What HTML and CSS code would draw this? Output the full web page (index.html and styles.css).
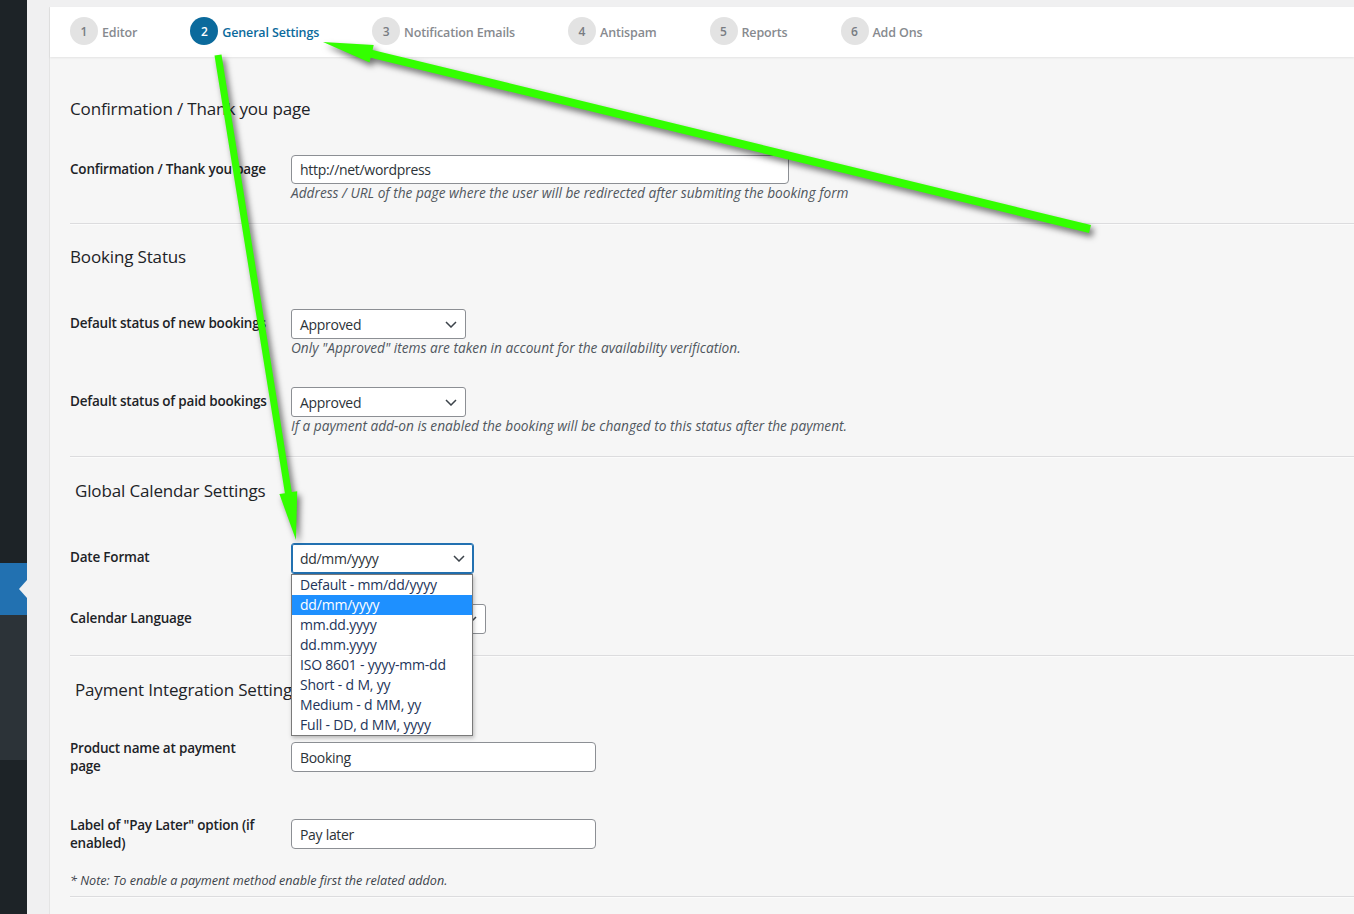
FILE: index.html
```html
<!DOCTYPE html>
<html lang="en">
<head>
  <meta charset="UTF-8">
  <meta name="viewport" content="width=device-width, initial-scale=1.0">
  <title>General Settings</title>
  <link rel="stylesheet" href="styles.css">
</head>
<body>
  <!-- Admin menu strip -->
  <div class="admin-menu">
    <div class="menu-top"></div>
    <div class="menu-current"><span class="menu-notch"></span></div>
    <div class="menu-sub"></div>
    <div class="menu-rest"></div>
  </div>

  <div class="wrap">
    <div class="panel">
      <!-- Steps -->
      <nav class="steps">
        <div class="step"><span class="step-num">1</span><span class="step-label">Editor</span></div>
        <div class="step active"><span class="step-num">2</span><span class="step-label">General Settings</span></div>
        <div class="step"><span class="step-num">3</span><span class="step-label">Notification Emails</span></div>
        <div class="step"><span class="step-num">4</span><span class="step-label">Antispam</span></div>
        <div class="step"><span class="step-num">5</span><span class="step-label">Reports</span></div>
        <div class="step"><span class="step-num">6</span><span class="step-label">Add Ons</span></div>
      </nav>

      <div class="settings">
        <!-- Confirmation -->
        <h3 class="section-title first">Confirmation / Thank you page</h3>
        <div class="field-row">
          <label class="field-label">Confirmation / Thank you page</label>
          <div class="field">
            <input class="text-input input-url" type="text" value="http://net/wordpress" readonly>
            <p class="field-desc">Address / URL of the page where the user will be redirected after submiting the booking form</p>
          </div>
        </div>
        <hr class="divider">

        <!-- Booking status -->
        <h3 class="section-title">Booking Status</h3>
        <div class="field-row">
          <label class="field-label">Default status of new bookings</label>
          <div class="field">
            <div class="select select-status">
              <span>Approved</span>
              <svg class="chevron" width="12" height="7" viewBox="0 0 12 7"><path d="M1 1l5 5 5-5" fill="none" stroke="#3c434a" stroke-width="1.5"/></svg>
            </div>
            <p class="field-desc">Only "Approved" items are taken in account for the availability verification.</p>
          </div>
        </div>
        <div class="field-row">
          <label class="field-label">Default status of paid bookings</label>
          <div class="field">
            <div class="select select-status">
              <span>Approved</span>
              <svg class="chevron" width="12" height="7" viewBox="0 0 12 7"><path d="M1 1l5 5 5-5" fill="none" stroke="#3c434a" stroke-width="1.5"/></svg>
            </div>
            <p class="field-desc">If a payment add-on is enabled the booking will be changed to this status after the payment.</p>
          </div>
        </div>
        <hr class="divider">

        <!-- Calendar -->
        <h3 class="section-title indented">Global Calendar Settings</h3>
        <div class="field-row">
          <label class="field-label">Date Format</label>
          <div class="field">
            <div class="select select-date focused">
              <span>dd/mm/yyyy</span>
              <svg class="chevron" width="12" height="7" viewBox="0 0 12 7"><path d="M1 1l5 5 5-5" fill="none" stroke="#3c434a" stroke-width="1.5"/></svg>
            </div>
            <ul class="dropdown-list">
              <li>Default - mm/dd/yyyy</li>
              <li class="selected">dd/mm/yyyy</li>
              <li>mm.dd.yyyy</li>
              <li>dd.mm.yyyy</li>
              <li>ISO 8601 - yyyy-mm-dd</li>
              <li>Short - d M, yy</li>
              <li>Medium - d MM, yy</li>
              <li>Full - DD, d MM, yyyy</li>
            </ul>
          </div>
        </div>
        <div class="field-row">
          <label class="field-label">Calendar Language</label>
          <div class="field">
            <!-- value is covered by the open list -->
            <div class="select select-lang">
              <span></span>
              <svg class="chevron" width="12" height="7" viewBox="0 0 12 7"><path d="M1 1l5 5 5-5" fill="none" stroke="#3c434a" stroke-width="1.5"/></svg>
            </div>
          </div>
        </div>
        <hr class="divider">

        <!-- Payment -->
        <h3 class="section-title indented">Payment Integration Settings</h3>
        <div class="field-row">
          <label class="field-label two-line">Product name at payment page</label>
          <div class="field">
            <input class="text-input input-short" type="text" value="Booking" readonly>
          </div>
        </div>
        <div class="field-row tall">
          <label class="field-label two-line">Label of "Pay Later" option (if enabled)</label>
          <div class="field">
            <input class="text-input input-short" type="text" value="Pay later" readonly>
          </div>
        </div>
        <p class="note">* Note: To enable a payment method enable first the related addon.</p>
        <hr class="divider last">
      </div>
    </div>
  </div>

  <!-- Green annotation arrows -->
  <svg class="annotations" width="1354" height="914" viewBox="0 0 1354 914">
    <polygon points="214.5,55.6 221.5,54.4 291.8,492 297.2,491.2 296,540 279.4,494 284.9,493.2" fill="#33ff00"/>
    <polygon points="323,42 373.7,45.1 372.6,49.9 1091,225.1 1089,232.9 370.7,57.7 369.5,62.5" fill="#33ff00"/>
  </svg>
</body>
</html>
```

FILE: styles.css
```css
/* Base */
* {
  box-sizing: border-box;
}
body {
  margin: 0;
  width: 1354px;
  height: 914px;
  overflow: hidden;
  display: flex;
  position: relative;
  background-color: #f0f0f1;
  font-family: "Open Sans", "Noto Sans", sans-serif;
  font-size: 14px;
  color: #1d2327;
}

/* Admin menu strip */
.admin-menu {
  width: 27px;
  flex: 0 0 27px;
  display: flex;
  flex-direction: column;
}
.menu-top {
  height: 563px;
  background-color: #1d2327;
}
.menu-current {
  height: 52px;
  background-color: #2271b1;
  position: relative;
}
.menu-notch {
  position: absolute;
  right: 0;
  top: 17px;
  border-top: 9px solid transparent;
  border-bottom: 9px solid transparent;
  border-right: 8px solid #f0f0f1;
}
.menu-sub {
  height: 145px;
  background-color: #2c3338;
}
.menu-rest {
  flex: 1;
  background-color: #1d2327;
}

/* Page area */
.wrap {
  flex: 1;
  padding: 7px 0 0 22px;
}
.panel {
  height: 100%;
  background-color: #f6f6f6;
  border-left: 1px solid #e4e4e4;
}

/* Steps bar */
.steps {
  height: 50px;
  background-color: #fff;
  display: flex;
  align-items: center;
  gap: 53px;
  padding-left: 20px;
  box-shadow: 0 1px 2px rgba(0, 0, 0, 0.08);
}
.step {
  display: flex;
  align-items: center;
  gap: 4px;
}
.step-num {
  width: 28px;
  height: 28px;
  border-radius: 50%;
  background-color: #e3e3e3;
  color: #787c82;
  font-size: 12px;
  font-weight: 600;
  display: flex;
  align-items: center;
  justify-content: center;
  margin-top: -2px;
}
.step-label {
  font-size: 12.5px;
  font-weight: 600;
  letter-spacing: -0.15px;
  color: #878a8f;
  padding-top: 1px;
}
.step.active .step-num {
  background-color: #0b6a9c;
  color: #fff;
}
.step.active .step-label {
  color: #0b6a9c;
}

/* Settings */
.settings {
  padding-left: 20px;
}
.section-title {
  margin: 20px 0 40px;
  font-size: 17px;
  line-height: 24px;
  font-weight: 400;
  letter-spacing: -0.15px;
  color: #1d2327;
}
.section-title.first {
  margin: 40px 0 34px;
}
.section-title.indented {
  padding-left: 5px;
  margin-top: 21px;
}
.field-row {
  display: flex;
  align-items: flex-start;
}
.field-row + .field-row {
  margin-top: 30px;
}
.field-row.tall {
  margin-top: 44px;
}
.field-label {
  flex: 0 0 221px;
  padding: 5px 23px 0 0;
  font-size: 13.5px;
  font-weight: 600;
  letter-spacing: -0.2px;
  line-height: 18px;
}
.field-label.two-line {
  padding-top: 0;
  margin-top: -3px;
}
.field {
  position: relative;
}
.field-desc {
  margin: 0;
  font-size: 13.7px;
  line-height: 18px;
  font-style: italic;
  color: #50575e;
}

/* Inputs */
.text-input {
  display: block;
  height: 30px;
  padding: 0 8px;
  border: 1px solid #8c8f94;
  border-radius: 4px;
  background-color: #fff;
  font-family: inherit;
  font-size: 14px;
  letter-spacing: -0.3px;
  color: #2c3338;
}
.input-url {
  width: 498px;
  height: 29px;
}
.input-short {
  width: 305px;
}
.select {
  height: 30px;
  display: flex;
  align-items: center;
  justify-content: space-between;
  padding: 0 8px;
  border: 1px solid #8c8f94;
  border-radius: 3px;
  background-color: #fff;
  letter-spacing: -0.3px;
  color: #2c3338;
}
.select.focused {
  height: 31px;
  border-color: #2271b1;
  box-shadow: 0 0 0 1px #2271b1 inset;
}
.select-status {
  width: 175px;
}
.select-date {
  width: 183px;
}
.select-lang {
  width: 195px;
}
.chevron {
  display: block;
}

/* Open list under the date format */
.dropdown-list {
  position: absolute;
  top: 31px;
  left: 0;
  width: 182px;
  margin: 0;
  padding: 0;
  list-style: none;
  background-color: #fff;
  border: 1px solid #7a7a7a;
  box-shadow: 1px 2px 4px rgba(0, 0, 0, 0.25);
  z-index: 5;
}
.dropdown-list li {
  height: 20px;
  line-height: 20px;
  padding-left: 8px;
  letter-spacing: -0.2px;
  color: #233459;
  white-space: nowrap;
}
.dropdown-list li.selected {
  background-color: #1e90ff;
  color: #fff;
}

/* Note and dividers */
.note {
  margin: 21px 0 0;
  font-size: 12.6px;
  line-height: 16px;
  font-style: italic;
  color: #3c434a;
}
.divider {
  height: 0;
  margin: 21px 0 0;
  border: 0;
  border-top: 1px solid #dcdcde;
  border-bottom: 1px solid #fbfbfb;
}
.divider.last {
  margin-top: 7px;
}

/* Annotation overlay */
.annotations {
  position: absolute;
  left: 0;
  top: 0;
  pointer-events: none;
  z-index: 10;
  filter: drop-shadow(3px 4px 3px rgba(0, 0, 0, 0.55));
}
```
